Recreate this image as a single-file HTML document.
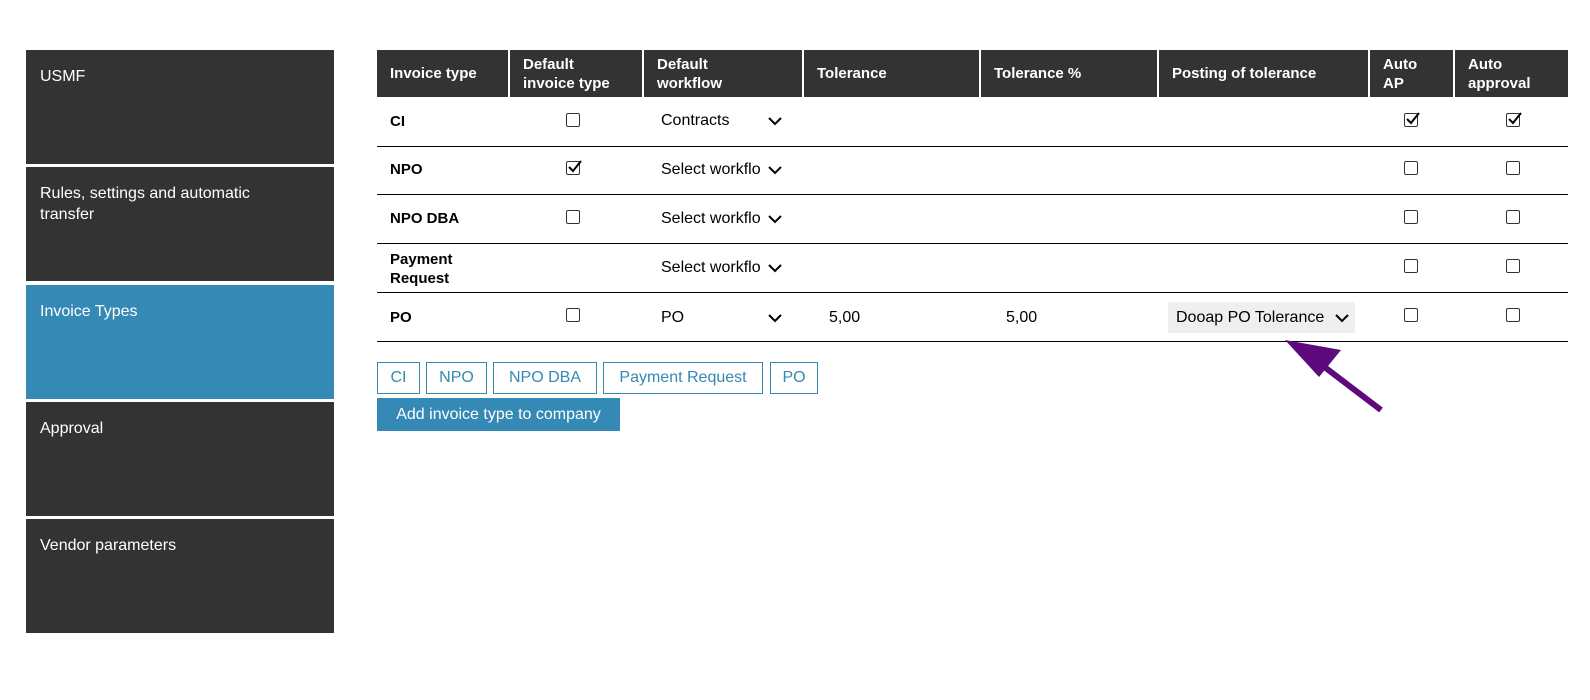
<!DOCTYPE html>
<html><head><style>
*{margin:0;padding:0;box-sizing:border-box}
body{width:1590px;height:700px;background:#fff;font-family:"Liberation Sans",Arial,sans-serif;position:relative;overflow:hidden}
.side{position:absolute;left:26px;width:308px;background:#333;color:#fff;font-size:16px;padding:16px 60px 16px 14px;line-height:21px}
.hd{position:absolute;top:50px;height:47px;background:#333;color:#fff;font-weight:bold;font-size:15px;padding:0 13px;display:flex;align-items:center;line-height:19px}
.line{position:absolute;left:377px;width:1191px;height:1px;background:#000}
.t{position:absolute;font-size:16px;color:#000}
.b{font-weight:bold;font-size:15px}
.cb{position:absolute;width:14px;height:14px;border:1.5px solid #333;border-radius:2px}
.chev{position:absolute;width:14px;height:9px}
.btn{position:absolute;top:362px;height:32px;border:1px solid #3589b5;color:#3589b5;font-size:16px;display:flex;align-items:center;justify-content:center}
</style></head><body>
<div class="side" style="top:50px;height:114px">USMF</div>
<div class="side" style="top:167px;height:114px">Rules, settings and automatic transfer</div>
<div class="side" style="top:285px;height:114px;background:#3589b5">Invoice Types</div>
<div class="side" style="top:402px;height:114px">Approval</div>
<div class="side" style="top:519px;height:114px">Vendor parameters</div>

<div class="hd" style="left:377px;width:131px">Invoice type</div>
<div class="hd" style="left:510px;width:132px">Default<br>invoice type</div>
<div class="hd" style="left:644px;width:158px">Default<br>workflow</div>
<div class="hd" style="left:804px;width:175px">Tolerance</div>
<div class="hd" style="left:981px;width:176px">Tolerance %</div>
<div class="hd" style="left:1159px;width:209px">Posting of tolerance</div>
<div class="hd" style="left:1370px;width:83px">Auto<br>AP</div>
<div class="hd" style="left:1455px;width:113px">Auto<br>approval</div>

<div class="line" style="top:146px"></div>
<div class="line" style="top:194px"></div>
<div class="line" style="top:243px"></div>
<div class="line" style="top:292px"></div>
<div class="line" style="top:341px"></div>

<div class="t b" style="left:390px;top:113px">CI</div>
<div class="t b" style="left:390px;top:161px">NPO</div>
<div class="t b" style="left:390px;top:210px">NPO DBA</div>
<div class="t b" style="left:390px;top:250px;line-height:19px">Payment<br>Request</div>
<div class="t b" style="left:390px;top:309px">PO</div>

<div class="cb" style="left:566px;top:113px"></div>
<div class="cb" style="left:566px;top:161px"></div>
<div class="cb" style="left:566px;top:210px"></div>
<div class="cb" style="left:566px;top:308px"></div>
<svg style="position:absolute;left:566px;top:158px" width="18" height="18"><path d="M3 9 L7 13 L15 3" stroke="#000" stroke-width="2" fill="none"/></svg>

<div class="t" style="left:661px;top:112px">Contracts</div>
<div class="t" style="left:661px;top:161px">Select workflo</div>
<div class="t" style="left:661px;top:210px">Select workflo</div>
<div class="t" style="left:661px;top:259px">Select workflo</div>
<div class="t" style="left:661px;top:309px">PO</div>
<svg class="chev" style="left:768px;top:117px"><path d="M1 1 L7 7 L13 1" stroke="#000" stroke-width="2" fill="none"/></svg>
<svg class="chev" style="left:768px;top:166px"><path d="M1 1 L7 7 L13 1" stroke="#000" stroke-width="2" fill="none"/></svg>
<svg class="chev" style="left:768px;top:215px"><path d="M1 1 L7 7 L13 1" stroke="#000" stroke-width="2" fill="none"/></svg>
<svg class="chev" style="left:768px;top:264px"><path d="M1 1 L7 7 L13 1" stroke="#000" stroke-width="2" fill="none"/></svg>
<svg class="chev" style="left:768px;top:314px"><path d="M1 1 L7 7 L13 1" stroke="#000" stroke-width="2" fill="none"/></svg>

<div class="t" style="left:829px;top:309px">5,00</div>
<div class="t" style="left:1006px;top:309px">5,00</div>
<div style="position:absolute;left:1168px;top:302px;width:187px;height:31px;background:#efefef"></div>
<div class="t" style="left:1176px;top:309px">Dooap PO Tolerance</div>
<svg class="chev" style="left:1335px;top:314px"><path d="M1 1 L7 7 L13 1" stroke="#000" stroke-width="2" fill="none"/></svg>

<div class="cb" style="left:1404px;top:113px"></div>
<div class="cb" style="left:1506px;top:113px"></div>
<svg style="position:absolute;left:1404px;top:110px" width="18" height="18"><path d="M3 9 L7 13 L15 3" stroke="#000" stroke-width="2" fill="none"/></svg>
<svg style="position:absolute;left:1506px;top:110px" width="18" height="18"><path d="M3 9 L7 13 L15 3" stroke="#000" stroke-width="2" fill="none"/></svg>
<div class="cb" style="left:1404px;top:161px"></div>
<div class="cb" style="left:1506px;top:161px"></div>
<div class="cb" style="left:1404px;top:210px"></div>
<div class="cb" style="left:1506px;top:210px"></div>
<div class="cb" style="left:1404px;top:259px"></div>
<div class="cb" style="left:1506px;top:259px"></div>
<div class="cb" style="left:1404px;top:308px"></div>
<div class="cb" style="left:1506px;top:308px"></div>

<div class="btn" style="left:377px;width:43px">CI</div>
<div class="btn" style="left:426px;width:61px">NPO</div>
<div class="btn" style="left:493px;width:104px">NPO DBA</div>
<div class="btn" style="left:603px;width:160px">Payment Request</div>
<div class="btn" style="left:770px;width:48px">PO</div>
<div style="position:absolute;left:377px;top:398px;width:243px;height:33px;background:#3589b5;color:#fff;font-size:16px;display:flex;align-items:center;justify-content:center">Add invoice type to company</div>

<svg style="position:absolute;left:0;top:0" width="1590" height="700">
<path d="M1381 410 L1310 356" stroke="#5c0a7c" stroke-width="6"/>
<polygon points="1285,340 1341,350 1319,377" fill="#5c0a7c"/>
</svg>
</body></html>
